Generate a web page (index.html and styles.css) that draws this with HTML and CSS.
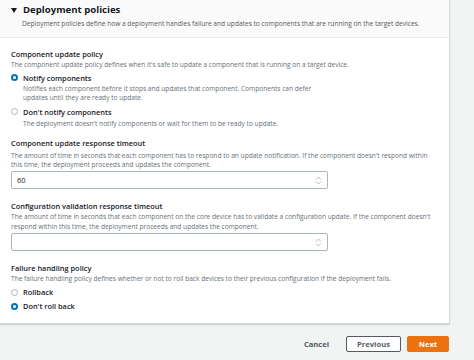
FILE: index.html
```html
<!DOCTYPE html>
<html>
<head>
<meta charset="utf-8">
<link rel="stylesheet" href="styles.css">
</head>
<body>
<div class="page">
  <div class="card">
    <div class="header">
      <div class="title-row">
        <svg class="caret" width="6" height="5" viewBox="0 0 6 5"><path d="M0 0 L6 0 L3 5 Z" fill="#16191f"/></svg>
        <span class="title">Deployment policies</span>
      </div>
      <div class="subtitle">Deployment policies define how a deployment handles failure and updates to components that are running on the target devices.</div>
    </div>
    <div class="body">
      <div class="section s1">
        <div class="label">Component update policy</div>
        <div class="desc">The component update policy defines when it's safe to update a component that is running on a target device.</div>
        <div class="radio-group">
          <div class="radio r1">
            <div class="radio-row"><span class="dot on"></span><span class="rlabel">Notify components</span></div>
            <div class="rdesc">Notifies each component before it stops and updates that component. Components can defer updates until they are ready to update.</div>
          </div>
          <div class="radio r2">
            <div class="radio-row"><span class="dot"></span><span class="rlabel">Don't notify components</span></div>
            <div class="rdesc">The deployment doesn't notify components or wait for them to be ready to update.</div>
          </div>
        </div>
      </div>
      <div class="section s2">
        <div class="label">Component update response timeout</div>
        <div class="desc">The amount of time in seconds that each component has to respond to an update notification. If the component doesn't respond within this time, the deployment proceeds and updates the component.</div>
        <div class="input"><span class="value">60</span>
          <svg class="spin" width="7" height="9" viewBox="0 0 7 9"><path d="M1 3.5 L3.5 1 L6 3.5 M1 5.5 L3.5 8 L6 5.5" fill="none" stroke="#aab7b8" stroke-width="0.9"/></svg>
        </div>
      </div>
      <div class="section s3">
        <div class="label">Configuration validation response timeout</div>
        <div class="desc">The amount of time in seconds that each component on the core device has to validate a configuration update. If the component doesn't respond within this time, the deployment proceeds and updates the component.</div>
        <div class="input"><span class="value"></span>
          <svg class="spin" width="7" height="9" viewBox="0 0 7 9"><path d="M1 3.5 L3.5 1 L6 3.5 M1 5.5 L3.5 8 L6 5.5" fill="none" stroke="#aab7b8" stroke-width="0.9"/></svg>
        </div>
      </div>
      <div class="section s4">
        <div class="label">Failure handling policy</div>
        <div class="desc">The failure handling policy defines whether or not to roll back devices to their previous configuration if the deployment fails.</div>
        <div class="radio-group">
          <div class="radio r3">
            <div class="radio-row"><span class="dot"></span><span class="rlabel">Rollback</span></div>
          </div>
          <div class="radio r4">
            <div class="radio-row"><span class="dot on"></span><span class="rlabel">Don't roll back</span></div>
          </div>
        </div>
      </div>
    </div>
  </div>
  <div class="footer">
    <span class="btn-link">Cancel</span>
    <span class="btn btn-normal">Previous</span>
    <span class="btn btn-primary">Next</span>
  </div>
</div>
</body>
</html>
```

FILE: styles.css
```css
html, body {
  margin: 0;
  padding: 0;
  background: #f2f3f3;
}
body {
  font-family: "Open Sans", "Liberation Sans", sans-serif;
  color: #16191f;
  width: 474px;
  height: 360px;
  overflow: hidden;
}
.page {
  display: flex;
  flex-direction: column;
}
.card {
  width: 449px;
  background: #ffffff;
  border-right: 1px solid #d5dbdb;
  border-bottom: 1px solid #d5dbdb;
  box-shadow: 0 1px 1px rgba(0,28,36,0.15);
}
.header {
  height: 38px;
  box-sizing: border-box;
  background: #fafafa;
  border-bottom: 1px solid #eaeded;
  padding: 3px 0 0 11px;
}
.title-row {
  display: flex;
  align-items: center;
  gap: 6px;
  height: 14px;
}
.caret {
  display: block;
}
.title {
  font-size: 9.6px;
  font-weight: 700;
  line-height: 14px;
}
.subtitle {
  font-size: 6.6px;
  line-height: 9px;
  color: #545b64;
  margin-top: 2px;
  padding-left: 11px;
}
.body {
  padding: 10px 11px 11px 11px;
  display: flex;
  flex-direction: column;
}
.label {
  font-size: 7.4px;
  font-weight: 600;
  line-height: 12px;
}
.desc {
  font-size: 6.6px;
  line-height: 9.5px;
  color: #687078;
}
.radio-group {
  display: flex;
  flex-direction: column;
  width: 305px;
}
.radio-row {
  display: flex;
  align-items: center;
  gap: 5px;
  height: 12px;
}
.r1 { margin-top: 2px; }
.r2 { margin-top: 3px; }
.r2 .rdesc { margin-top: 1.5px; }
.r3 { margin-top: 2.5px; }
.r4 { margin-top: 2px; }
.dot {
  width: 7px;
  height: 7px;
  border-radius: 50%;
  box-sizing: border-box;
  border: 1px solid #aab7b8;
  background: #fff;
  flex: none;
}
.dot.on {
  border: 2.3px solid #0073bb;
}
.rlabel {
  font-size: 7.4px;
  font-weight: 600;
  line-height: 12px;
}
.rdesc {
  font-size: 6.6px;
  line-height: 9.5px;
  color: #687078;
  padding-left: 12px;
}
.s2 { margin-top: 8.5px; }
.s2 .desc { line-height: 9px; margin-top: 2px; }
.s3 { margin-top: 11px; }
.s4 { margin-top: 11px; }
.input {
  margin-top: 2px;
  width: 317px;
  height: 18px;
  box-sizing: border-box;
  border: 1px solid #aab7b8;
  border-radius: 2px;
  display: flex;
  align-items: center;
  justify-content: space-between;
  padding: 0 5px 0 5px;
}
.value {
  font-size: 7.4px;
  line-height: 12px;
}
.footer {
  width: 449px;
  display: flex;
  justify-content: flex-end;
  align-items: center;
  gap: 6px;
  margin-top: 11.5px;
}
.btn-link {
  font-size: 7.6px;
  font-weight: 700;
  color: #545b64;
  margin-right: 11px;
}
.btn {
  height: 16px;
  box-sizing: border-box;
  display: flex;
  align-items: center;
  justify-content: center;
  font-size: 7.6px;
  font-weight: 700;
  border-radius: 2px;
}
.btn-normal {
  width: 55px;
  background: #fff;
  border: 1px solid #545b64;
  color: #545b64;
}
.btn-primary {
  width: 42px;
  background: #ec7211;
  border: 1px solid #ec7211;
  color: #fff;
}
```
